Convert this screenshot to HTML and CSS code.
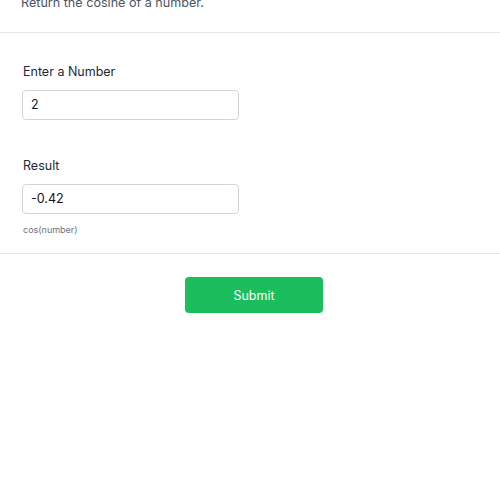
FILE: index.html
```html
<!DOCTYPE html>
<html>
<head>
<meta charset="utf-8">
<link rel="stylesheet" href="styles.css">
</head>
<body>
<div class="page">
  <header class="header">
    <p class="desc">Return the cosine of a number.</p>
  </header>
  <section class="fields">
    <div class="field">
      <label class="label">Enter a Number</label>
      <div class="input">2</div>
    </div>
    <div class="field">
      <label class="label">Result</label>
      <div class="input">-0.42</div>
      <div class="help">cos(number)</div>
    </div>
  </section>
  <footer class="actions">
    <button class="submit">Submit</button>
  </footer>
</div>
</body>
</html>
```
FILE: styles.css
```css
html, body { margin: 0; padding: 0; background: #fff; }
body { font-family: Inter, "Noto Sans", sans-serif; color: #1f2937; }
.page { margin-top: -7px; }
.header { padding: 0 21px 19px; border-bottom: 1px solid #e5e7eb; }
.desc { margin: 0; font-size: 12.6px; line-height: 20px; color: #4b5563; }
.fields { padding: 29px 22px 16px; border-bottom: 1px solid #e5e7eb; display: flex; flex-direction: column; gap: 36px; }
.field { display: flex; flex-direction: column; }
.label { font-size: 12.5px; line-height: 20px; color: #1f2937; margin-bottom: 8px; margin-left: 1px; }
.input { box-sizing: border-box; width: 217px; height: 30px; border: 1px solid #d1d5db; border-radius: 4px; padding: 0 8px; font-size: 12.5px; line-height: 28px; color: #111827; }
.help { font-size: 9px; line-height: 14px; color: #6b7280; margin-top: 9px; margin-left: 1px; }
.actions { display: flex; justify-content: center; padding: 23px 0 0 8px; }
.submit { width: 138px; height: 36px; border: none; border-radius: 4px; background: #1bbd5c; color: #fff; font-family: Inter, "Noto Sans", sans-serif; font-size: 12.5px; cursor: pointer; }
```
